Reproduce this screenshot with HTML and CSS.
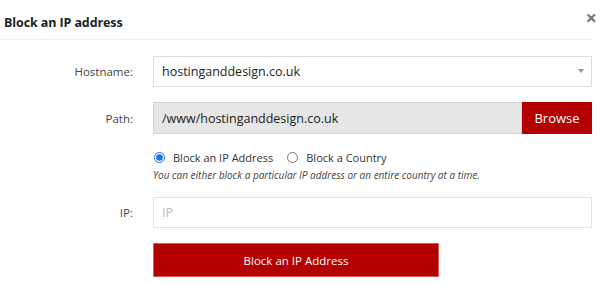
FILE: index.html
```html
<!DOCTYPE html>
<html lang="en">
<head>
    <meta charset="UTF-8">
    <meta name="viewport" content="width=device-width, initial-scale=1.0">
    <title>Block an IP address</title>
    <link rel="stylesheet" href="styles.css">
</head>
<body>
    <div class="modal">
        <div class="modal-header">
            <h1>Block an IP address</h1>
            <button class="close" type="button">&times;</button>
        </div>

        <form class="modal-body">
            <div class="form-row">
                <label for="hostname">Hostname:</label>
                <div class="select-wrap">
                    <select id="hostname">
                        <option>hostinganddesign.co.uk</option>
                    </select>
                    <span class="caret"></span>
                </div>
            </div>

            <div class="form-row">
                <label for="path">Path:</label>
                <div class="input-addon">
                    <input type="text" id="path" value="/www/hostinganddesign.co.uk" readonly>
                    <button type="button" class="btn-red btn-browse">Browse</button>
                </div>
            </div>

            <div class="form-row radios-row">
                <span></span>
                <div>
                    <div class="radios">
                        <label class="radio"><input type="radio" name="mode" checked> Block an IP Address</label>
                        <label class="radio"><input type="radio" name="mode"> Block a Country</label>
                    </div>
                    <p class="help">You can either block a particular IP address or an entire country at a time.</p>
                </div>
            </div>

            <div class="form-row ip-row">
                <label for="ip">IP:</label>
                <input type="text" id="ip" placeholder="IP">
            </div>

            <div class="form-row submit-row">
                <span></span>
                <button type="button" class="btn-red btn-submit">Block an IP Address</button>
            </div>
        </form>
    </div>
</body>
</html>
```

FILE: styles.css
```css
:root {
    --red: #b30000;
    --red-border: #d95c5c;
    --text-color: #333;
    --label-color: #444;
    --input-border: #ddd;
}

* {
    box-sizing: border-box;
    margin: 0;
    padding: 0;
    font-family: 'Open Sans', 'Noto Sans', sans-serif;
}

body {
    background: #fff;
    color: var(--text-color);
    width: 600px;
    overflow: hidden;
}

.modal {
    width: 600px;
}

.modal-header {
    width: 593px;
    height: 40px;
    display: flex;
    justify-content: space-between;
    align-items: center;
    border-bottom: 1px solid #f0f0f0;
    padding-left: 4px;
}

.modal-header h1 {
    font-size: 12.5px;
    font-weight: 700;
    color: #222;
    padding-top: 5px;
    letter-spacing: -0.1px;
}

.close {
    background: none;
    border: none;
    font-size: 20px;
    line-height: 1;
    color: #777;
    font-weight: 700;
    margin-right: -4px;
    margin-top: -3px;
    cursor: pointer;
}

.modal-body {
    width: 592px;
    padding-top: 16px;
}

.form-row {
    display: grid;
    grid-template-columns: 133px 1fr;
    column-gap: 20px;
    align-items: center;
    margin-bottom: 15px;
}

.form-row > label {
    text-align: right;
    font-size: 11.5px;
    color: var(--label-color);
}

.select-wrap {
    position: relative;
}

select,
input[type="text"] {
    width: 100%;
    height: 31px;
    border: 1px solid var(--input-border);
    background: #fff;
    font-size: 12.5px;
    color: #222;
    padding: 0 8px;
    outline: none;
    border-radius: 0;
}

select {
    appearance: none;
    -webkit-appearance: none;
}

.caret {
    position: absolute;
    right: 8px;
    top: 13px;
    border-left: 3px solid transparent;
    border-right: 3px solid transparent;
    border-top: 4px solid #999;
}

.input-addon {
    display: flex;
    height: 32px;
}

.input-addon input {
    flex: 1;
    height: 32px;
    background: #e6e6e6;
    border-color: #d4d4d4;
}

.btn-red {
    background: var(--red);
    color: #fff;
    border: 1px solid var(--red-border);
    cursor: pointer;
}

.btn-browse {
    width: 70px;
    font-size: 13px;
    border-color: var(--red);
}

.radios-row {
    margin-top: 1px;
    margin-bottom: 15px;
}

.radios {
    display: flex;
    gap: 14px;
    padding-left: 1px;
    height: 17px;
    align-items: center;
}

.radio {
    display: flex;
    align-items: center;
    gap: 5px;
    font-size: 11px;
    color: #333;
}

.radio input {
    width: 11px;
    height: 11px;
    margin: 0 3px 0 0;
    accent-color: #1a73e8;
}

.help {
    margin-top: 2px;
    font-size: 10px;
    font-style: italic;
    color: #444;
    line-height: 14px;
}

.ip-row input {
    border-color: #e3e3e3;
    border-width: 1px;
}

.ip-row input::placeholder {
    color: #bbb;
}

.submit-row {
    margin-top: 1px;
}

.btn-submit {
    width: 286px;
    height: 34px;
    font-size: 11.5px;
}
```
